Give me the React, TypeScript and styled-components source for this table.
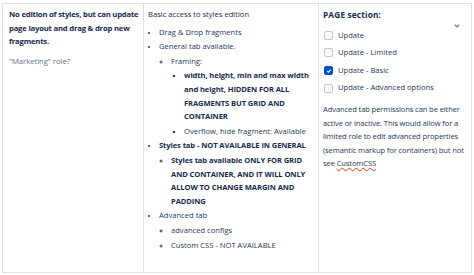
import React from "react";
import styled, { createGlobalStyle } from "styled-components";

const Global = createGlobalStyle`
  html, body { margin: 0; padding: 0; background: #fff; }
  body { font-family: "Open Sans", "Noto Sans", sans-serif; color: #172b4d; }
`;

const Table = styled.table`
  margin: 3px 0 0 2px;
  width: 469px;
  height: 270px;
  border-collapse: collapse;
  table-layout: fixed;
  font-size: 7.6px;
  line-height: 13.6px;
`;

const Cell = styled.td<{ w: number; pl: number; pr: number }>`
  width: ${(p) => p.w}px;
  vertical-align: top;
  border: 1px solid #dfe1e6;
  padding: 4px ${(p) => p.pr}px 0 ${(p) => p.pl}px;
  box-sizing: border-box;
  position: relative;
`;

const Strong = styled.p`
  margin: 0;
  font-weight: 700;
  font-size: 7.7px;
  letter-spacing: -0.2px;
  white-space: nowrap;
  color: #172b4d;
`;

const Heading = styled(Strong)`
  font-size: 8.3px;
  letter-spacing: 0.15px;
`;

const Para = styled.p<{ muted?: boolean }>`
  margin: 6px 0 0;
  color: ${(p) => (p.muted ? "#5e6c84" : "#253858")};
`;

const List = styled.ul<{ kind: string; indent: number }>`
  margin: 0;
  padding-left: ${(p) => p.indent}px;
  list-style-type: ${(p) => p.kind};
  & > li { margin-top: 1px; }
  & > li::marker { font-size: 7px; }
`;

const TopList = styled(List)`
  margin-top: 4px;
`;

const Bold = styled.span`
  font-weight: 700;
  letter-spacing: -0.1px;
  color: #172b4d;
`;

const Item = styled.li`
  color: #253858;
`;

const Chevron = styled.svg`
  position: absolute;
  right: 11px;
  top: 20px;
`;

const Options = styled.div`
  display: flex;
  flex-direction: column;
  gap: 4px;
  margin-top: 7px;
`;

const Option = styled.label`
  display: flex;
  align-items: center;
  gap: 5px;
  height: 13.6px;
  padding-left: 1px;
  color: #253858;
`;

const Box = styled.span<{ checked?: boolean }>`
  width: 9px;
  height: 9px;
  box-sizing: border-box;
  border-radius: 2px;
  border: 1px solid ${(p) => (p.checked ? "#0052cc" : "#c1c7d0")};
  background: ${(p) => (p.checked ? "#0052cc" : "#fafbfc")};
  display: flex;
  align-items: center;
  justify-content: center;
`;

const Wavy = styled.span`
  text-decoration: underline wavy #de350b;
  text-decoration-thickness: 0.6px;
  text-underline-offset: 0.5px;
`;

const Desc = styled.p`
  margin: 8px 0 0;
  letter-spacing: -0.12px;
  color: #253858;
`;

const options = [
  { label: "Update", checked: false },
  { label: "Update - Limited", checked: false },
  { label: "Update - Basic", checked: true },
  { label: "Update - Advanced options", checked: false },
];

export default function App() {
  return (
    <>
      <Global />
      <Table>
        <tbody>
          <tr>
            <Cell w={141} pl={6} pr={2}>
              <Strong>
                No edition of styles, but can update
                <br />
                page layout and drag &amp; drop new
                <br />
                fragments.
              </Strong>
              <Para muted>"Marketing" role?</Para>
            </Cell>
            <Cell w={175} pl={4} pr={6}>
              <div>Basic access to styles edition</div>
              <TopList kind="disc" indent={11}>
                <Item>Drag &amp; Drop fragments</Item>
                <Item>
                  General tab available.
                  <List kind="circle" indent={12}>
                    <Item>
                      Framing:
                      <List kind="square" indent={13}>
                        <Item>
                          <Bold>
                            width, height, min and max width
                            <br />
                            and height, HIDDEN FOR ALL
                            <br />
                            FRAGMENTS BUT GRID AND
                            <br />
                            CONTAINER
                          </Bold>
                        </Item>
                        <Item>Overflow, hide fragment: Available</Item>
                      </List>
                    </Item>
                  </List>
                </Item>
                <Item>
                  <Bold>Styles tab - NOT AVAILABLE IN GENERAL</Bold>
                  <List kind="circle" indent={12}>
                    <Item>
                      <Bold>
                        Styles tab available ONLY FOR GRID
                        <br />
                        AND CONTAINER, AND IT WILL ONLY
                        <br />
                        ALLOW TO CHANGE MARGIN AND
                        <br />
                        PADDING
                      </Bold>
                    </Item>
                  </List>
                </Item>
                <Item>
                  Advanced tab
                  <List kind="circle" indent={12}>
                    <Item>advanced configs</Item>
                    <Item>Custom CSS - NOT AVAILABLE</Item>
                  </List>
                </Item>
              </TopList>
            </Cell>
            <Cell w={153} pl={4} pr={3}>
              <Heading>PAGE section:</Heading>
              <Chevron width="6" height="4" viewBox="0 0 6 4">
                <path d="M1 1l2 2 2-2" fill="none" stroke="#6b778c" strokeWidth="1.1" strokeLinecap="round" />
              </Chevron>
              <Options>
                {options.map((o) => (
                  <Option key={o.label}>
                    <Box checked={o.checked}>
                      {o.checked && (
                        <svg width="6" height="6" viewBox="0 0 6 6">
                          <path d="M1.2 3.1l1.2 1.2 2.4-2.6" fill="none" stroke="#fff" strokeWidth="1.1" />
                        </svg>
                      )}
                    </Box>
                    {o.label}
                  </Option>
                ))}
              </Options>
              <Desc>
                Advanced tab permissions can be either active or inactive. This would allow for a limited role to edit advanced properties (semantic markup for containers) but not see <Wavy>CustomCSS</Wavy>
              </Desc>
            </Cell>
          </tr>
        </tbody>
      </Table>
    </>
  );
}
